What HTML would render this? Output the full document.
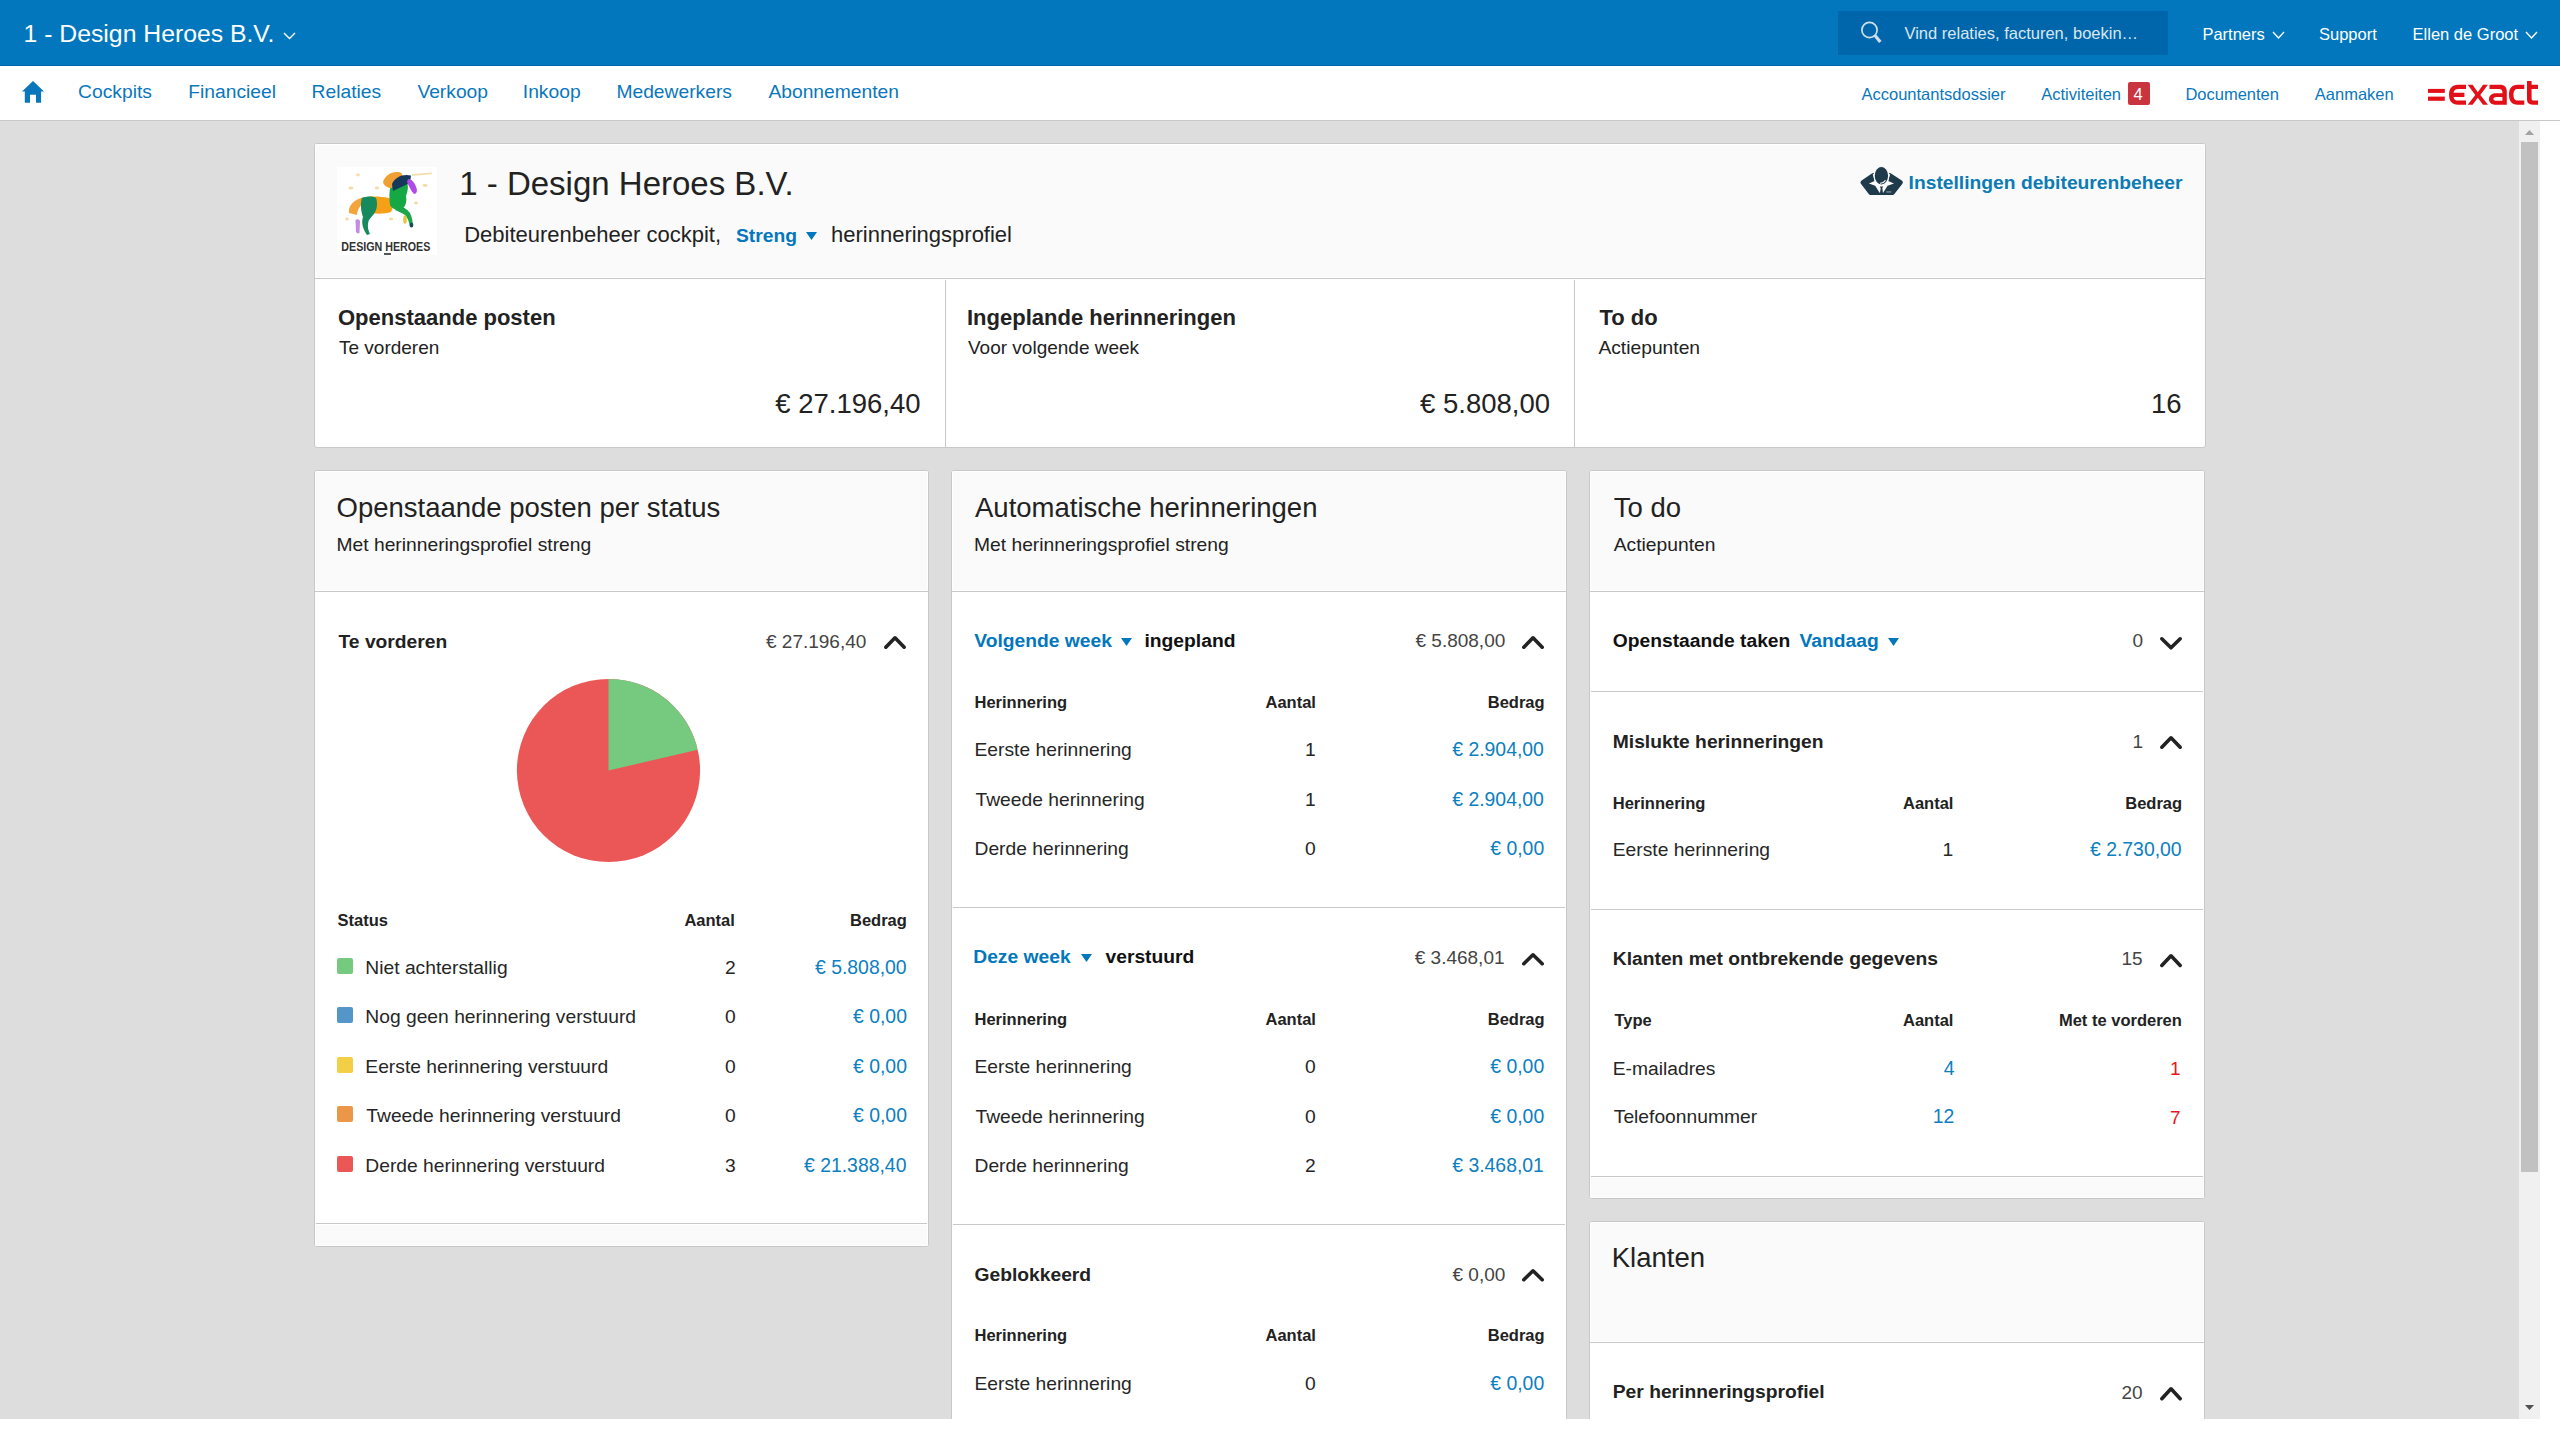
<!DOCTYPE html>
<html><head><meta charset="utf-8"><title>Debiteurenbeheer cockpit</title>
<style>
html,body{margin:0;padding:0;width:2560px;height:1440px;overflow:hidden;background:#fff;}
body{position:relative;font-family:"Liberation Sans",sans-serif;}
.t{position:absolute;white-space:nowrap;line-height:1;}
</style></head><body>
<div style="position:absolute;left:0px;top:0px;width:2560px;height:65px;background:#0277bd"></div>
<div style="position:absolute;left:0px;top:65px;width:2560px;height:1px;background:#006ab0"></div>
<div class="t" style="left:23.60px;top:21.84px;font-size:24.75px;color:#fff;">1 - Design Heroes B.V.</div>
<svg style="position:absolute;left:282px;top:31px" width="15" height="9.600000000000001"><polyline points="2,2 7.5,7.600000000000001 13,2" fill="none" stroke="#fff" stroke-width="1.4"/></svg>
<div style="position:absolute;left:1838px;top:11px;width:330px;height:44px;background:#0066ab"></div>
<svg style="position:absolute;left:1858px;top:19px" width="28" height="28"><circle cx="11.5" cy="11" r="7.6" fill="none" stroke="#cfdfec" stroke-width="1.7"/><line x1="17" y1="16.5" x2="22.3" y2="23" stroke="#cfdfec" stroke-width="3.2"/></svg>
<div class="t" style="left:1904.50px;top:24.78px;font-size:16.5px;color:#d9e6f0;">Vind relaties, facturen, boekin…</div>
<div class="t" style="left:2202.40px;top:25.93px;font-size:16.5px;color:#fff;">Partners</div>
<svg style="position:absolute;left:2271px;top:30px" width="15" height="10"><polyline points="2,2 7.5,8 13,2" fill="none" stroke="#fff" stroke-width="1.4"/></svg>
<div class="t" style="left:2319.00px;top:25.93px;font-size:16.5px;color:#fff;">Support</div>
<div class="t" style="left:2412.60px;top:25.93px;font-size:16.5px;color:#fff;">Ellen de Groot</div>
<svg style="position:absolute;left:2524px;top:30px" width="15" height="10"><polyline points="2,2 7.5,8 13,2" fill="none" stroke="#fff" stroke-width="1.4"/></svg>
<div style="position:absolute;left:0px;top:66px;width:2560px;height:54px;background:#fff"></div>
<div style="position:absolute;left:0px;top:120px;width:2560px;height:1px;background:#c8c8c8"></div>
<svg style="position:absolute;left:20px;top:79px" width="26" height="26"><path d="M2,12.6 L13,2 L24,12.6 L21.1,12.6 L21.1,23.8 L16,23.8 L16,15.7 L10,15.7 L10,23.8 L4.8,23.8 L4.8,12.6 Z" fill="#0a77bd"/></svg>
<div class="t" style="left:78.10px;top:82.30px;font-size:19.25px;color:#0a77bd;">Cockpits</div>
<div class="t" style="left:188.30px;top:82.30px;font-size:19.25px;color:#0a77bd;">Financieel</div>
<div class="t" style="left:311.60px;top:82.30px;font-size:19.25px;color:#0a77bd;">Relaties</div>
<div class="t" style="left:417.40px;top:82.30px;font-size:19.25px;color:#0a77bd;">Verkoop</div>
<div class="t" style="left:522.80px;top:82.30px;font-size:19.25px;color:#0a77bd;">Inkoop</div>
<div class="t" style="left:616.40px;top:82.30px;font-size:19.25px;color:#0a77bd;">Medewerkers</div>
<div class="t" style="left:768.40px;top:82.30px;font-size:19.25px;color:#0a77bd;">Abonnementen</div>
<div class="t" style="left:1861.50px;top:86.03px;font-size:16.5px;color:#0a77bd;">Accountantsdossier</div>
<div class="t" style="left:2041.25px;top:86.03px;font-size:16.5px;color:#0a77bd;">Activiteiten</div>
<div class="t" style="left:2185.40px;top:86.03px;font-size:16.5px;color:#0a77bd;">Documenten</div>
<div class="t" style="left:2314.80px;top:86.03px;font-size:16.5px;color:#0a77bd;">Aanmaken</div>
<div style="position:absolute;left:2128px;top:82px;width:22px;height:23px;background:#c9343f;border-radius:2px"></div>
<div class="t" style="left:2133.50px;top:85.53px;font-size:16.5px;color:#fff;">4</div>
<svg style="position:absolute;left:2426px;top:79px" width="116" height="28" viewBox="2426 79 116 28">
<g fill="#e3101a">
<rect x="2428" y="88.9" width="16.8" height="4"/>
<rect x="2428" y="96.6" width="16.8" height="4.2"/>
<path d="M2466,84.8 L2458,84.8 C2452,84.8 2449,88.5 2449,94.7 C2449,101 2452,104.7 2458,104.7 L2466,104.7 L2466,100.6 L2458.5,100.6 C2455,100.6 2453.6,99 2453.6,96.9 L2464.4,96.9 L2464.4,92.8 L2453.6,92.8 C2453.8,90.4 2455.2,88.9 2458.5,88.9 L2466,88.9 Z"/>
<path d="M2467.7,84.8 L2472.6,84.8 L2477.8,92.2 L2483,84.8 L2487.9,84.8 L2480.3,95 L2488,104.7 L2483,104.7 L2477.8,97.8 L2472.6,104.7 L2467.7,104.7 L2475.3,95 Z"/>
<path d="M2489.5,84.8 L2500,84.8 C2504.5,84.8 2506.8,87.3 2506.8,91.5 L2506.8,104.7 L2496,104.7 C2491.5,104.7 2489,102.6 2489,99.2 C2489,95.7 2491.5,93.3 2496,93.3 L2502.4,93.3 L2502.4,92 C2502.4,90 2501.3,88.9 2499,88.9 L2489.5,88.9 Z M2502.4,96.9 L2496.6,96.9 C2494.5,96.9 2493.4,97.8 2493.4,99 C2493.4,100.2 2494.5,100.8 2496.6,100.8 L2502.4,100.8 Z"/>
<path d="M2524.3,84.8 L2517.5,84.8 C2511.8,84.8 2509,88.6 2509,94.7 C2509,101 2511.8,104.7 2517.5,104.7 L2524.3,104.7 L2524.3,100.6 L2518,100.6 C2514.8,100.6 2513.5,98.6 2513.5,94.7 C2513.5,90.9 2514.8,88.9 2518,88.9 L2524.3,88.9 Z"/>
<path d="M2527,80.9 L2531.6,80.9 L2531.6,84.8 L2538,84.8 L2538,88.9 L2531.6,88.9 L2531.6,98.5 C2531.6,100 2532.3,100.6 2533.8,100.6 L2538,100.6 L2538,104.7 L2532.8,104.7 C2528.8,104.7 2527,102.7 2527,99 Z"/>
</g></svg>
<div style="position:absolute;left:0px;top:121px;width:2519px;height:1298px;background:#dddddd"></div>
<div style="position:absolute;left:2519px;top:121px;width:21px;height:1298px;background:#f0f0f0"></div>
<div style="position:absolute;left:2521px;top:142px;width:17px;height:1030px;background:#c1c1c1"></div>
<svg style="position:absolute;left:2519px;top:121px" width="21" height="21"><polygon points="6,14 10.5,9 15,14" fill="#a3a3a3"/></svg>
<svg style="position:absolute;left:2519px;top:1398px" width="21" height="21"><polygon points="6,7 15,7 10.5,12" fill="#505050"/></svg>
<div style="position:absolute;left:314px;top:143px;width:1890px;height:303px;border:1px solid #c8c8c8;border-radius:3px;background:#fff;overflow:hidden">
<div style="position:absolute;left:0;right:0;top:0px;height:134px;background:#fafafa;box-shadow:inset 0 0 0 1px #fff;"></div>
<div style="position:absolute;left:0px;right:0px;top:134px;height:1px;background:#c8c8c8"></div>
<div style="position:absolute;left:630px;top:136px;width:1px;height:167px;background:#c8c8c8"></div>
<div style="position:absolute;left:1259px;top:136px;width:1px;height:167px;background:#c8c8c8"></div>
</div>
<svg style="position:absolute;left:337px;top:167px" width="100" height="88" viewBox="0 0 100 88">
<defs><filter id="lb" filterUnits="userSpaceOnUse" x="0" y="0" width="100" height="88"><feGaussianBlur stdDeviation="0.5"/></filter></defs>
<rect width="100" height="88" fill="#fff"/>
<g fill="#efc46a" opacity="0.6">
<ellipse cx="21" cy="8" rx="1.8" ry="1.4"/><ellipse cx="14" cy="21" rx="2.4" ry="1.5"/><ellipse cx="40" cy="21" rx="2.2" ry="1.4"/>
<ellipse cx="88" cy="18.3" rx="2.6" ry="1.6"/><ellipse cx="79" cy="36" rx="2" ry="1.4"/><ellipse cx="54" cy="52" rx="2.2" ry="1.4"/><ellipse cx="10" cy="52" rx="1.8" ry="1.4"/>
</g>
<g filter="url(#lb)">
<path d="M75,8 L95,6.4" stroke="#f3e0b0" stroke-width="1.8"/>
<path d="M12,46 C11,40 15,34 24,31 L26,36 C22,40 20,44 20,48 Z" fill="#f3a53a"/>
<path d="M24,31 C32,29 42,29 52,31 C56,35 57,40 54,45 C48,47 40,47 34,46 L26,46 Z" fill="#f5a017"/>
<path d="M25,31 C30,29 36,29 39,31 C41,36 40,44 36,48 L32,53 C30,58 31,63 33,67 L30,68 C26,62 24,56 26,50 C24,44 23,37 25,31 Z" fill="#138a5c"/>
<path d="M18.5,53 C20,52 22,52 23,54 L22.5,66 C21,67 19.5,66 19,65 Z" fill="#c58be0"/>
<path d="M62,38 C66,40 70,42 73,46 C75,50 76,55 76,60 L73,60 C72,55 71,51 68,48 C65,46 61,44 58,43 Z" fill="#1aa548"/>
<ellipse cx="74.5" cy="58" rx="1.8" ry="2.6" fill="#1d4a5a"/>
<ellipse cx="68" cy="52.5" rx="1.8" ry="4.2" fill="#e6c43a"/>
<path d="M54,18 C57,13 63,11 69,13 C72,18 71,24 69,29 C70,34 69,39 65,42 C60,44 55,42 53,38 C52,31 52,24 54,18 Z" fill="#17a845"/>
<path d="M46,15 C48,9 53,5 60,5 C64,5 66,7 65,9 C60,11 57,15 55,21 C51,21 47,19 46,15 Z" fill="#f0a030"/>
<path d="M55,17 C58,10 66,6.5 74,8.5 L73,16 C68,18 62,21 56,24 Z" fill="#17375a"/>
<path d="M71,12 C75,12 78,16 79.5,21 C80.5,24 79.5,27 77,27 C74,24 72,19 70,15 Z" fill="#b04ae6"/>
</g>
<text x="4.3" y="83.7" font-family="Liberation Sans" font-weight="bold" font-size="12.6" fill="#333" textLength="89" lengthAdjust="spacingAndGlyphs">DESIGN HEROES</text>
<rect x="47" y="86" width="7" height="2" fill="#555"/>
</svg>
<div class="t" style="left:459.25px;top:166.96px;font-size:33px;color:#222;">1 - Design Heroes B.V.</div>
<div class="t" style="left:464.20px;top:223.77px;font-size:22px;color:#222;">Debiteurenbeheer cockpit,</div>
<div class="t" style="left:736.00px;top:226.10px;font-size:19.25px;color:#0277bd;font-weight:bold;">Streng</div>
<svg style="position:absolute;left:806px;top:232px" width="11" height="8"><polygon points="0,0 11,0 5.5,8" fill="#0277bd"/></svg>
<div class="t" style="left:831.00px;top:223.77px;font-size:22px;color:#222;">herinneringsprofiel</div>
<svg style="position:absolute;left:1858px;top:164px" width="48" height="34" viewBox="0 0 48 34">
<path d="M4,16.3 L14.6,9.1 L32.3,9.1 L43.4,16.3 C45,17.3 45.2,18.6 44.4,19.7 L36.2,30.2 C35.8,30.7 35.3,30.9 34.7,30.9 L12.4,30.9 C11.8,30.9 11.3,30.7 10.9,30.2 L2.9,19.7 C2.1,18.6 2.4,17.3 4,16.3 Z" fill="#1f3a4b"/>
<path d="M14.6,9.6 L16.6,17 L10.9,19.6 L17.2,21.8 L21.6,28.8 L25.2,28.8 L29.6,21.8 L36,19.6 L30.2,17 L32.3,9.6 L23.4,15 Z" fill="#fafafa"/>
<path d="M21.9,22.4 L25.1,22.4 L24.3,24.2 L25,28.9 L22,28.9 L22.7,24.2 Z" fill="#1f3a4b"/>
<ellipse cx="23.4" cy="11.8" rx="7.3" ry="9.3" fill="#1f3a4b" stroke="#fafafa" stroke-width="1.2"/>
<path d="M22,19.2 C24,19.3 26,18.4 27.5,16.4" fill="none" stroke="#fafafa" stroke-width="1.1"/>
<rect x="28.3" y="27.4" width="5" height="1.1" fill="#8fa0ab"/>
</svg>
<div class="t" style="left:1908.60px;top:172.60px;font-size:19.25px;color:#0b7ab5;font-weight:bold;">Instellingen debiteurenbeheer</div>
<div class="t" style="left:338.00px;top:306.67px;font-size:22px;color:#222;font-weight:bold;">Openstaande posten</div>
<div class="t" style="left:339.00px;top:337.91px;font-size:19px;color:#222;">Te vorderen</div>
<div class="t" style="left:-1079.40px;width:2000px;text-align:right;top:389.52px;font-size:27.5px;color:#222;">€ 27.196,40</div>
<div class="t" style="left:967.00px;top:306.67px;font-size:22px;color:#222;font-weight:bold;">Ingeplande herinneringen</div>
<div class="t" style="left:968.00px;top:337.91px;font-size:19px;color:#222;">Voor volgende week</div>
<div class="t" style="left:-450.00px;width:2000px;text-align:right;top:389.52px;font-size:27.5px;color:#222;">€ 5.808,00</div>
<div class="t" style="left:1599.40px;top:306.67px;font-size:22px;color:#222;font-weight:bold;">To do</div>
<div class="t" style="left:1598.40px;top:337.70px;font-size:19.25px;color:#222;">Actiepunten</div>
<div class="t" style="left:181.59px;width:2000px;text-align:right;top:389.52px;font-size:27.5px;color:#222;">16</div>
<div style="position:absolute;left:314px;top:470px;width:613px;height:775px;border:1px solid #c8c8c8;border-radius:3px;background:#fff;overflow:hidden">
<div style="position:absolute;left:0;right:0;top:0px;height:120px;background:#fafafa;box-shadow:inset 0 0 0 1px #fff;"></div>
<div style="position:absolute;left:0px;right:0px;top:120px;height:1px;background:#c8c8c8"></div>
<div style="position:absolute;left:1px;right:1px;top:752px;height:1px;background:#c8c8c8"></div>
<div style="position:absolute;left:0;right:0;top:753px;height:22px;background:#fafafa;box-shadow:inset 0 0 0 1px #fff;"></div>
</div>
<div class="t" style="left:336.50px;top:493.72px;font-size:27.5px;color:#222;">Openstaande posten per status</div>
<div class="t" style="left:336.50px;top:535.20px;font-size:19.25px;color:#222;">Met herinneringsprofiel streng</div>
<div class="t" style="left:338.50px;top:631.70px;font-size:19.25px;color:#222;font-weight:bold;">Te vorderen</div>
<div class="t" style="left:-1133.66px;width:2000px;text-align:right;top:631.91px;font-size:19px;color:#444;">€ 27.196,40</div>
<svg style="position:absolute;left:884px;top:636px;overflow:visible" width="22" height="13"><polyline points="1.8,11.2 11.0,1.8 20.2,11.2" fill="none" stroke="#222" stroke-width="3.6" stroke-linejoin="round" stroke-linecap="round"/></svg>
<svg style="position:absolute;left:0;top:0;overflow:visible" width="1" height="1"><circle cx="608.5" cy="770.5" r="91.6" fill="#eb5757"/><path d="M608.5,770.5 L608.5,678.9 A91.6,91.6 0 0 1 697.71,749.71 Z" fill="#76ca80"/></svg>
<div class="t" style="left:337.60px;top:911.53px;font-size:16.5px;color:#222;font-weight:bold;">Status</div>
<div class="t" style="left:-1265.18px;width:2000px;text-align:right;top:911.53px;font-size:16.5px;color:#222;font-weight:bold;">Aantal</div>
<div class="t" style="left:-1093.16px;width:2000px;text-align:right;top:911.53px;font-size:16.5px;color:#222;font-weight:bold;">Bedrag</div>
<div style="position:absolute;left:337px;top:958px;width:16px;height:16px;background:#76ca80;border-radius:2px"></div>
<div class="t" style="left:365.30px;top:958.00px;font-size:19.25px;color:#262626;">Niet achterstallig</div>
<div class="t" style="left:-1264.30px;width:2000px;text-align:right;top:958.00px;font-size:19.25px;color:#262626;">2</div>
<div class="t" style="left:-1093.36px;width:2000px;text-align:right;top:957.87px;font-size:19.4px;color:#0d80c0;">€ 5.808,00</div>
<div style="position:absolute;left:337px;top:1007px;width:16px;height:16px;background:#5596c8;border-radius:2px"></div>
<div class="t" style="left:365.30px;top:1007.45px;font-size:19.25px;color:#262626;">Nog geen herinnering verstuurd</div>
<div class="t" style="left:-1264.30px;width:2000px;text-align:right;top:1007.45px;font-size:19.25px;color:#262626;">0</div>
<div class="t" style="left:-1093.09px;width:2000px;text-align:right;top:1007.32px;font-size:19.4px;color:#0d80c0;">€ 0,00</div>
<div style="position:absolute;left:337px;top:1057px;width:16px;height:16px;background:#f3cf45;border-radius:2px"></div>
<div class="t" style="left:365.30px;top:1056.90px;font-size:19.25px;color:#262626;">Eerste herinnering verstuurd</div>
<div class="t" style="left:-1264.30px;width:2000px;text-align:right;top:1056.90px;font-size:19.25px;color:#262626;">0</div>
<div class="t" style="left:-1093.09px;width:2000px;text-align:right;top:1056.77px;font-size:19.4px;color:#0d80c0;">€ 0,00</div>
<div style="position:absolute;left:337px;top:1106px;width:16px;height:16px;background:#ec9748;border-radius:2px"></div>
<div class="t" style="left:366.30px;top:1106.35px;font-size:19.25px;color:#262626;">Tweede herinnering verstuurd</div>
<div class="t" style="left:-1264.30px;width:2000px;text-align:right;top:1106.35px;font-size:19.25px;color:#262626;">0</div>
<div class="t" style="left:-1093.09px;width:2000px;text-align:right;top:1106.22px;font-size:19.4px;color:#0d80c0;">€ 0,00</div>
<div style="position:absolute;left:337px;top:1156px;width:16px;height:16px;background:#eb5757;border-radius:2px"></div>
<div class="t" style="left:365.30px;top:1155.80px;font-size:19.25px;color:#262626;">Derde herinnering verstuurd</div>
<div class="t" style="left:-1264.30px;width:2000px;text-align:right;top:1155.80px;font-size:19.25px;color:#262626;">3</div>
<div class="t" style="left:-1093.58px;width:2000px;text-align:right;top:1155.67px;font-size:19.4px;color:#0d80c0;">€ 21.388,40</div>
<div style="position:absolute;left:951px;top:470px;width:614px;height:998px;border:1px solid #c8c8c8;border-radius:3px;background:#fff;overflow:hidden">
<div style="position:absolute;left:0;right:0;top:0px;height:120px;background:#fafafa;box-shadow:inset 0 0 0 1px #fff;"></div>
<div style="position:absolute;left:0px;right:0px;top:120px;height:1px;background:#c8c8c8"></div>
<div style="position:absolute;left:1px;right:1px;top:436px;height:1px;background:#c8c8c8"></div>
<div style="position:absolute;left:1px;right:1px;top:753px;height:1px;background:#c8c8c8"></div>
</div>
<div class="t" style="left:975.00px;top:493.72px;font-size:27.5px;color:#222;">Automatische herinneringen</div>
<div class="t" style="left:974.00px;top:535.20px;font-size:19.25px;color:#222;">Met herinneringsprofiel streng</div>
<div class="t" style="left:974.25px;top:631.20px;font-size:19.25px;color:#0277bd;font-weight:bold;">Volgende week</div>
<svg style="position:absolute;left:1121px;top:638px" width="11" height="8"><polygon points="0,0 11,0 5.5,8" fill="#0277bd"/></svg>
<div class="t" style="left:1144.50px;top:631.20px;font-size:19.25px;color:#111;font-weight:bold;">ingepland</div>
<div class="t" style="left:-494.72px;width:2000px;text-align:right;top:631.41px;font-size:19px;color:#444;">€ 5.808,00</div>
<svg style="position:absolute;left:1522px;top:636px;overflow:visible" width="22" height="13"><polyline points="1.8,11.2 11.0,1.8 20.2,11.2" fill="none" stroke="#222" stroke-width="3.6" stroke-linejoin="round" stroke-linecap="round"/></svg>
<div class="t" style="left:974.50px;top:694.03px;font-size:16.5px;color:#222;font-weight:bold;">Herinnering</div>
<div class="t" style="left:-684.08px;width:2000px;text-align:right;top:694.03px;font-size:16.5px;color:#222;font-weight:bold;">Aantal</div>
<div class="t" style="left:-455.41px;width:2000px;text-align:right;top:694.03px;font-size:16.5px;color:#222;font-weight:bold;">Bedrag</div>
<div class="t" style="left:974.50px;top:740.45px;font-size:19.25px;color:#262626;">Eerste herinnering</div>
<div class="t" style="left:-684.30px;width:2000px;text-align:right;top:740.45px;font-size:19.25px;color:#262626;">1</div>
<div class="t" style="left:-456.11px;width:2000px;text-align:right;top:740.32px;font-size:19.4px;color:#0d80c0;">€ 2.904,00</div>
<div class="t" style="left:975.50px;top:789.85px;font-size:19.25px;color:#262626;">Tweede herinnering</div>
<div class="t" style="left:-684.30px;width:2000px;text-align:right;top:789.85px;font-size:19.25px;color:#262626;">1</div>
<div class="t" style="left:-456.11px;width:2000px;text-align:right;top:789.72px;font-size:19.4px;color:#0d80c0;">€ 2.904,00</div>
<div class="t" style="left:974.50px;top:839.25px;font-size:19.25px;color:#262626;">Derde herinnering</div>
<div class="t" style="left:-684.30px;width:2000px;text-align:right;top:839.25px;font-size:19.25px;color:#262626;">0</div>
<div class="t" style="left:-455.84px;width:2000px;text-align:right;top:839.12px;font-size:19.4px;color:#0d80c0;">€ 0,00</div>
<div class="t" style="left:973.25px;top:947.45px;font-size:19.25px;color:#0277bd;font-weight:bold;">Deze week</div>
<svg style="position:absolute;left:1081px;top:954px" width="11" height="8"><polygon points="0,0 11,0 5.5,8" fill="#0277bd"/></svg>
<div class="t" style="left:1105.50px;top:947.45px;font-size:19.25px;color:#111;font-weight:bold;">verstuurd</div>
<div class="t" style="left:-495.47px;width:2000px;text-align:right;top:947.66px;font-size:19px;color:#444;">€ 3.468,01</div>
<svg style="position:absolute;left:1522px;top:952.5px;overflow:visible" width="22" height="12.5"><polyline points="1.8,10.7 11.0,1.8 20.2,10.7" fill="none" stroke="#222" stroke-width="3.6" stroke-linejoin="round" stroke-linecap="round"/></svg>
<div class="t" style="left:974.50px;top:1011.03px;font-size:16.5px;color:#222;font-weight:bold;">Herinnering</div>
<div class="t" style="left:-684.08px;width:2000px;text-align:right;top:1011.03px;font-size:16.5px;color:#222;font-weight:bold;">Aantal</div>
<div class="t" style="left:-455.41px;width:2000px;text-align:right;top:1011.03px;font-size:16.5px;color:#222;font-weight:bold;">Bedrag</div>
<div class="t" style="left:974.50px;top:1057.45px;font-size:19.25px;color:#262626;">Eerste herinnering</div>
<div class="t" style="left:-684.30px;width:2000px;text-align:right;top:1057.45px;font-size:19.25px;color:#262626;">0</div>
<div class="t" style="left:-455.84px;width:2000px;text-align:right;top:1057.32px;font-size:19.4px;color:#0d80c0;">€ 0,00</div>
<div class="t" style="left:975.50px;top:1106.85px;font-size:19.25px;color:#262626;">Tweede herinnering</div>
<div class="t" style="left:-684.30px;width:2000px;text-align:right;top:1106.85px;font-size:19.25px;color:#262626;">0</div>
<div class="t" style="left:-455.84px;width:2000px;text-align:right;top:1106.72px;font-size:19.4px;color:#0d80c0;">€ 0,00</div>
<div class="t" style="left:974.50px;top:1156.25px;font-size:19.25px;color:#262626;">Derde herinnering</div>
<div class="t" style="left:-684.30px;width:2000px;text-align:right;top:1156.25px;font-size:19.25px;color:#262626;">2</div>
<div class="t" style="left:-456.11px;width:2000px;text-align:right;top:1156.12px;font-size:19.4px;color:#0d80c0;">€ 3.468,01</div>
<div class="t" style="left:974.50px;top:1264.95px;font-size:19.25px;color:#222;font-weight:bold;">Geblokkeerd</div>
<div class="t" style="left:-494.69px;width:2000px;text-align:right;top:1265.16px;font-size:19px;color:#444;">€ 0,00</div>
<svg style="position:absolute;left:1522px;top:1268.75px;overflow:visible" width="22" height="12.5"><polyline points="1.8,10.7 11.0,1.8 20.2,10.7" fill="none" stroke="#222" stroke-width="3.6" stroke-linejoin="round" stroke-linecap="round"/></svg>
<div class="t" style="left:974.50px;top:1327.28px;font-size:16.5px;color:#222;font-weight:bold;">Herinnering</div>
<div class="t" style="left:-684.08px;width:2000px;text-align:right;top:1327.28px;font-size:16.5px;color:#222;font-weight:bold;">Aantal</div>
<div class="t" style="left:-455.41px;width:2000px;text-align:right;top:1327.28px;font-size:16.5px;color:#222;font-weight:bold;">Bedrag</div>
<div class="t" style="left:974.50px;top:1373.70px;font-size:19.25px;color:#262626;">Eerste herinnering</div>
<div class="t" style="left:-684.30px;width:2000px;text-align:right;top:1373.70px;font-size:19.25px;color:#262626;">0</div>
<div class="t" style="left:-455.84px;width:2000px;text-align:right;top:1373.57px;font-size:19.4px;color:#0d80c0;">€ 0,00</div>
<div class="t" style="left:975.50px;top:1423.10px;font-size:19.25px;color:#262626;">Tweede herinnering</div>
<div class="t" style="left:-684.30px;width:2000px;text-align:right;top:1423.10px;font-size:19.25px;color:#262626;">0</div>
<div class="t" style="left:-455.84px;width:2000px;text-align:right;top:1422.97px;font-size:19.4px;color:#0d80c0;">€ 0,00</div>
<div style="position:absolute;left:1589px;top:470px;width:614px;height:727px;border:1px solid #c8c8c8;border-radius:3px;background:#fff;overflow:hidden">
<div style="position:absolute;left:0;right:0;top:0px;height:120px;background:#fafafa;box-shadow:inset 0 0 0 1px #fff;"></div>
<div style="position:absolute;left:0px;right:0px;top:120px;height:1px;background:#c8c8c8"></div>
<div style="position:absolute;left:1px;right:1px;top:220px;height:1px;background:#c8c8c8"></div>
<div style="position:absolute;left:1px;right:1px;top:438px;height:1px;background:#c8c8c8"></div>
<div style="position:absolute;left:1px;right:1px;top:705px;height:1px;background:#c8c8c8"></div>
<div style="position:absolute;left:0;right:0;top:706px;height:21px;background:#fafafa;box-shadow:inset 0 0 0 1px #fff;"></div>
</div>
<div class="t" style="left:1613.75px;top:493.72px;font-size:27.5px;color:#222;">To do</div>
<div class="t" style="left:1613.75px;top:535.20px;font-size:19.25px;color:#222;">Actiepunten</div>
<div class="t" style="left:1612.75px;top:631.20px;font-size:19.25px;color:#111;font-weight:bold;">Openstaande taken</div>
<div class="t" style="left:1799.50px;top:631.20px;font-size:19.25px;color:#0277bd;font-weight:bold;">Vandaag</div>
<svg style="position:absolute;left:1888px;top:638px" width="11" height="8"><polygon points="0,0 11,0 5.5,8" fill="#0277bd"/></svg>
<div class="t" style="left:143.06px;width:2000px;text-align:right;top:631.41px;font-size:19px;color:#444;">0</div>
<svg style="position:absolute;left:2160px;top:637.2px;overflow:visible" width="22" height="12.599999999999909"><polyline points="1.8,1.8 11.0,10.799999999999908 20.2,1.8" fill="none" stroke="#222" stroke-width="3.6" stroke-linejoin="round" stroke-linecap="round"/></svg>
<div class="t" style="left:1612.75px;top:731.70px;font-size:19.25px;color:#222;font-weight:bold;">Mislukte herinneringen</div>
<div class="t" style="left:143.06px;width:2000px;text-align:right;top:731.91px;font-size:19px;color:#444;">1</div>
<svg style="position:absolute;left:2160px;top:736px;overflow:visible" width="22" height="13"><polyline points="1.8,11.2 11.0,1.8 20.2,11.2" fill="none" stroke="#222" stroke-width="3.6" stroke-linejoin="round" stroke-linecap="round"/></svg>
<div class="t" style="left:1612.75px;top:795.28px;font-size:16.5px;color:#222;font-weight:bold;">Herinnering</div>
<div class="t" style="left:-46.58px;width:2000px;text-align:right;top:795.28px;font-size:16.5px;color:#222;font-weight:bold;">Aantal</div>
<div class="t" style="left:182.09px;width:2000px;text-align:right;top:795.28px;font-size:16.5px;color:#222;font-weight:bold;">Bedrag</div>
<div class="t" style="left:1612.75px;top:840.45px;font-size:19.25px;color:#262626;">Eerste herinnering</div>
<div class="t" style="left:-46.80px;width:2000px;text-align:right;top:840.45px;font-size:19.25px;color:#262626;">1</div>
<div class="t" style="left:181.64px;width:2000px;text-align:right;top:840.32px;font-size:19.4px;color:#0d80c0;">€ 2.730,00</div>
<div class="t" style="left:1612.75px;top:949.20px;font-size:19.25px;color:#222;font-weight:bold;">Klanten met ontbrekende gegevens</div>
<div class="t" style="left:142.62px;width:2000px;text-align:right;top:949.41px;font-size:19px;color:#444;">15</div>
<svg style="position:absolute;left:2160px;top:953.75px;overflow:visible" width="22" height="13.25"><polyline points="1.8,11.45 11.0,1.8 20.2,11.45" fill="none" stroke="#222" stroke-width="3.6" stroke-linejoin="round" stroke-linecap="round"/></svg>
<div class="t" style="left:1614.50px;top:1011.78px;font-size:16.5px;color:#222;font-weight:bold;">Type</div>
<div class="t" style="left:-46.58px;width:2000px;text-align:right;top:1011.78px;font-size:16.5px;color:#222;font-weight:bold;">Aantal</div>
<div class="t" style="left:181.84px;width:2000px;text-align:right;top:1011.78px;font-size:16.5px;color:#222;font-weight:bold;">Met te vorderen</div>
<div class="t" style="left:1612.75px;top:1058.70px;font-size:19.25px;color:#262626;">E-mailadres</div>
<div class="t" style="left:-45.47px;width:2000px;text-align:right;top:1058.57px;font-size:19.4px;color:#0d80c0;">4</div>
<div class="t" style="left:180.56px;width:2000px;text-align:right;top:1058.91px;font-size:19px;color:#e8161b;">1</div>
<div class="t" style="left:1613.75px;top:1107.45px;font-size:19.25px;color:#262626;">Telefoonnummer</div>
<div class="t" style="left:-45.69px;width:2000px;text-align:right;top:1107.32px;font-size:19.4px;color:#0d80c0;">12</div>
<div class="t" style="left:180.56px;width:2000px;text-align:right;top:1107.66px;font-size:19px;color:#e8161b;">7</div>
<div style="position:absolute;left:1589px;top:1221px;width:614px;height:398px;border:1px solid #c8c8c8;border-radius:3px;background:#fff;overflow:hidden">
<div style="position:absolute;left:0;right:0;top:0px;height:120px;background:#fafafa;box-shadow:inset 0 0 0 1px #fff;"></div>
<div style="position:absolute;left:0px;right:0px;top:120px;height:1px;background:#c8c8c8"></div>
</div>
<div class="t" style="left:1611.75px;top:1244.22px;font-size:27.5px;color:#222;">Klanten</div>
<div class="t" style="left:1612.75px;top:1382.45px;font-size:19.25px;color:#222;font-weight:bold;">Per herinneringsprofiel</div>
<div class="t" style="left:142.62px;width:2000px;text-align:right;top:1382.66px;font-size:19px;color:#444;">20</div>
<svg style="position:absolute;left:2160px;top:1386.5px;overflow:visible" width="22" height="13.5"><polyline points="1.8,11.7 11.0,1.8 20.2,11.7" fill="none" stroke="#222" stroke-width="3.6" stroke-linejoin="round" stroke-linecap="round"/></svg>
<div style="position:absolute;left:2540px;top:121px;width:20px;height:1319px;background:#fff"></div>
<div style="position:absolute;left:0px;top:1419px;width:2560px;height:21px;background:#fff"></div>
</body></html>
